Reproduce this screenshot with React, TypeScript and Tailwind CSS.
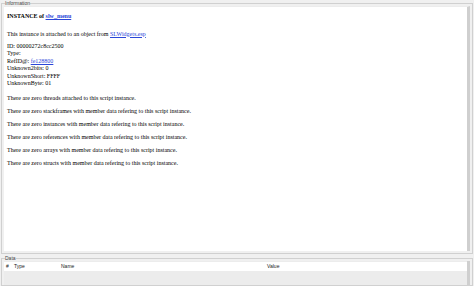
import React from "react";

const paragraphs = [
  "There are zero threads attached to this script instance.",
  "There are zero stackframes with member data refering to this script instance.",
  "There are zero instances with member data refering to this script instance.",
  "There are zero references with member data refering to this script instance.",
  "There are zero arrays with member data refering to this script instance.",
  "There are zero structs with member data refering to this script instance.",
];

export default function App() {
  return (
    <div className="flex h-[286px] w-[474px] flex-col overflow-hidden bg-[#f0f0f0] font-['Liberation_Sans',sans-serif]">
      {/* Information group */}
      <fieldset className="mx-[1px] h-[254px] border border-[#d0d0d0] pb-[2px] pl-[2px] pr-[2px]">
        <legend className="ml-[1px] text-[5px] leading-[6px] text-[#444]">Information</legend>
        <div className="h-[245px] overflow-hidden border-r-[3px] border-t border-[#cfcfcf] border-t-[#ececec] bg-white pl-[3px] pt-[6px] font-['Liberation_Serif',serif] text-[6px] leading-[7.5px] text-black">
          <p className="font-bold">
            INSTANCE of <a className="text-[#2a46d8] underline">slw_menu</a>
          </p>
          <p className="mt-[10px]">
            This instance is attached to an object from{" "}
            <a className="text-[#2a46d8] underline">SLWidgets.esp</a>
          </p>
          <div className="mt-[4.5px]">
            <p>ID: 00000272c8cc2500</p>
            <p>Type:</p>
            <p>
              RefID@: <a className="text-[#2a46d8] underline">fe128800</a>
            </p>
            <p>Unknown2bits: 0</p>
            <p>UnknownShort: FFFF</p>
            <p>UnknownByte: 01</p>
          </div>
          <div className="mt-[7px] flex flex-col gap-[5.5px]">
            {paragraphs.map((t) => (
              <p key={t}>{t}</p>
            ))}
          </div>
        </div>
      </fieldset>

      {/* Data group */}
      <fieldset className="mx-[1px] mt-[1px] flex-1 border border-[#d0d0d0] px-[2px]">
        <legend className="ml-[1px] text-[5px] leading-[6px] text-[#444]">Data</legend>
        <div className="h-full border-r-[3px] border-[#cfcfcf] bg-[#ececec] pt-[1px]">
          <div className="flex h-[9px] items-center bg-white text-[5px] text-[#222]">
            <span className="w-[8px] pl-[2px]">#</span>
            <span className="w-[47px] pl-[2px]">Type</span>
            <span className="w-[206px] pl-[2px]">Name</span>
            <span className="pl-[2px]">Value</span>
          </div>
        </div>
      </fieldset>
    </div>
  );
}
